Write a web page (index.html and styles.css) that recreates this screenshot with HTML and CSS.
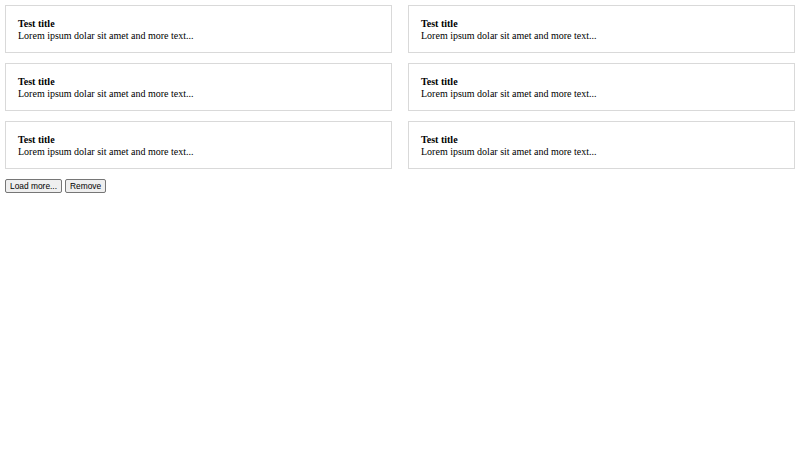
FILE: index.html
```html
<!DOCTYPE html>
<html>
<head>
<meta charset="utf-8">
<link rel="stylesheet" href="styles.css">
</head>
<body>
<div class="grid">
  <div class="card"><div class="title">Test title</div><div class="text">Lorem ipsum dolar sit amet and more text...</div></div>
  <div class="card"><div class="title">Test title</div><div class="text">Lorem ipsum dolar sit amet and more text...</div></div>
  <div class="card"><div class="title">Test title</div><div class="text">Lorem ipsum dolar sit amet and more text...</div></div>
  <div class="card"><div class="title">Test title</div><div class="text">Lorem ipsum dolar sit amet and more text...</div></div>
  <div class="card"><div class="title">Test title</div><div class="text">Lorem ipsum dolar sit amet and more text...</div></div>
  <div class="card"><div class="title">Test title</div><div class="text">Lorem ipsum dolar sit amet and more text...</div></div>
</div>
<div class="actions">
  <button class="btn">Load more...</button>
  <button class="btn">Remove</button>
</div>
</body>
</html>
```
FILE: styles.css
```css
body {
  margin: 5px;
  font-family: "Liberation Serif", serif;
  font-size: 10px;
  color: #000;
  background: #fff;
}
.grid {
  display: grid;
  grid-template-columns: 1fr 1fr;
  column-gap: 16px;
  row-gap: 10px;
}
.card {
  border: 1px solid #d9d9d9;
  padding: 2px 12px 0;
  box-sizing: border-box;
  height: 48px;
  display: flex;
  flex-direction: column;
  justify-content: center;
  line-height: 12px;
}
.title {
  font-weight: bold;
}
.actions {
  margin-top: 10px;
  display: flex;
  gap: 3px;
}
.btn {
  font-family: "Liberation Sans", Arial, sans-serif;
  font-size: 8.4px;
  padding: 1px 4px;
  margin: 0;
  line-height: 10px;
  border: 1px solid #767676;
  border-radius: 2px;
  background: #efefef;
  color: #000;
}
```
